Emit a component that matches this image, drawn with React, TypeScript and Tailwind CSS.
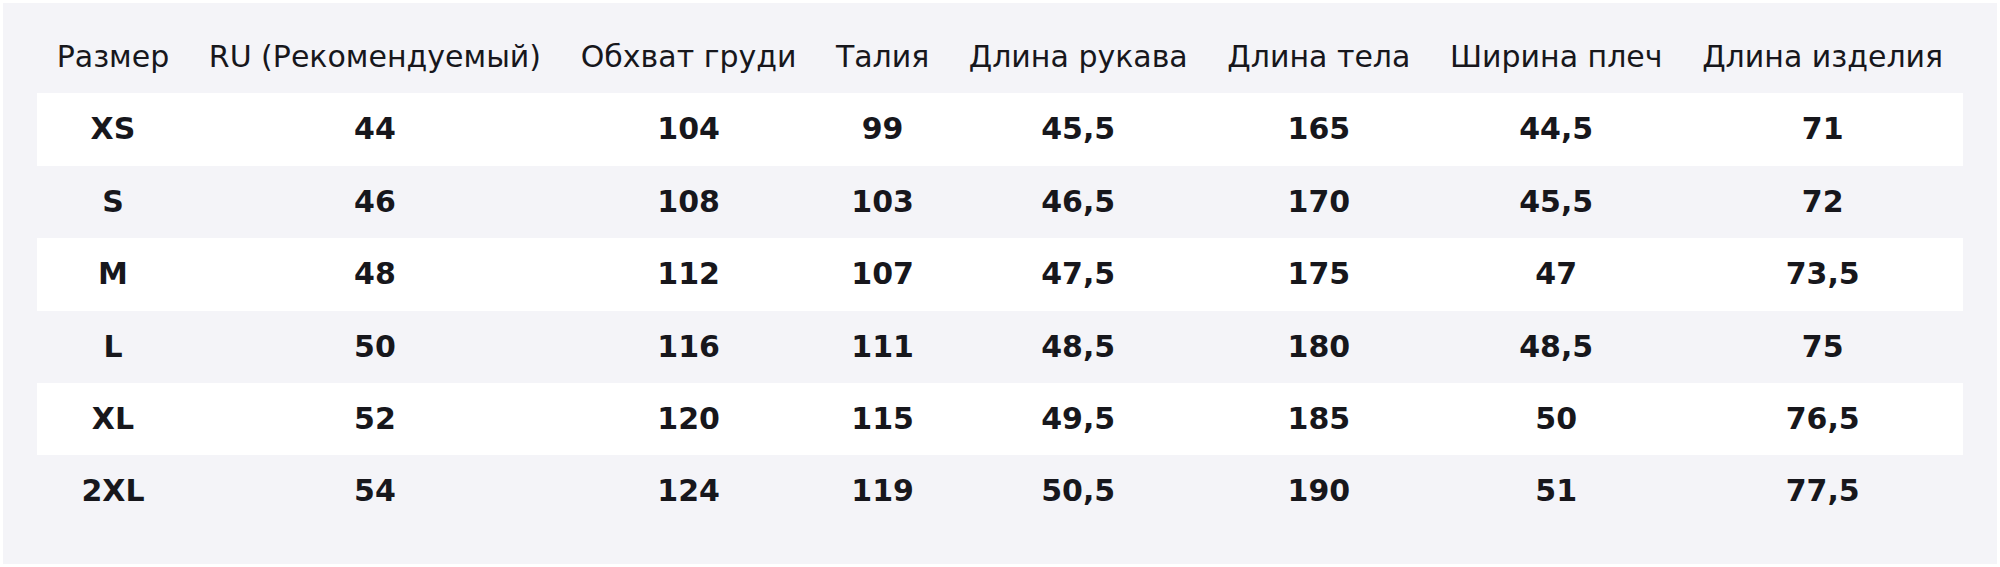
const headers = ['Размер', 'RU (Рекомендуемый)', 'Обхват груди', 'Талия', 'Длина рукава', 'Длина тела', 'Ширина плеч', 'Длина изделия'];

const rows = [
  ['XS', '44', '104', '99', '45,5', '165', '44,5', '71'],
  ['S', '46', '108', '103', '46,5', '170', '45,5', '72'],
  ['M', '48', '112', '107', '47,5', '175', '47', '73,5'],
  ['L', '50', '116', '111', '48,5', '180', '48,5', '75'],
  ['XL', '52', '120', '115', '49,5', '185', '50', '76,5'],
  ['2XL', '54', '124', '119', '50,5', '190', '51', '77,5'],
];

export default function App() {
  return (
    <div className="bg-white p-[3px] font-['DejaVu_Sans',sans-serif] text-[#17171c]">
      <div className="bg-[#f4f4f8] px-[34px] pt-[18px] pb-[36px] h-[561px]">
        <table className="w-full border-collapse text-center text-[30px] leading-[32.4px]">
          <thead>
            <tr>
              {headers.map(h => (
                <th key={h} className="px-[19.5px] py-5 font-normal whitespace-nowrap">{h}</th>
              ))}
            </tr>
          </thead>
          <tbody>
            {rows.map((r, i) => (
              <tr key={r[0]} className={i % 2 === 0 ? 'bg-white' : ''}>
                {r.map((v, j) => (
                  <td key={j} className="px-[19.5px] py-5 font-bold whitespace-nowrap">{v}</td>
                ))}
              </tr>
            ))}
          </tbody>
        </table>
      </div>
    </div>
  );
}
